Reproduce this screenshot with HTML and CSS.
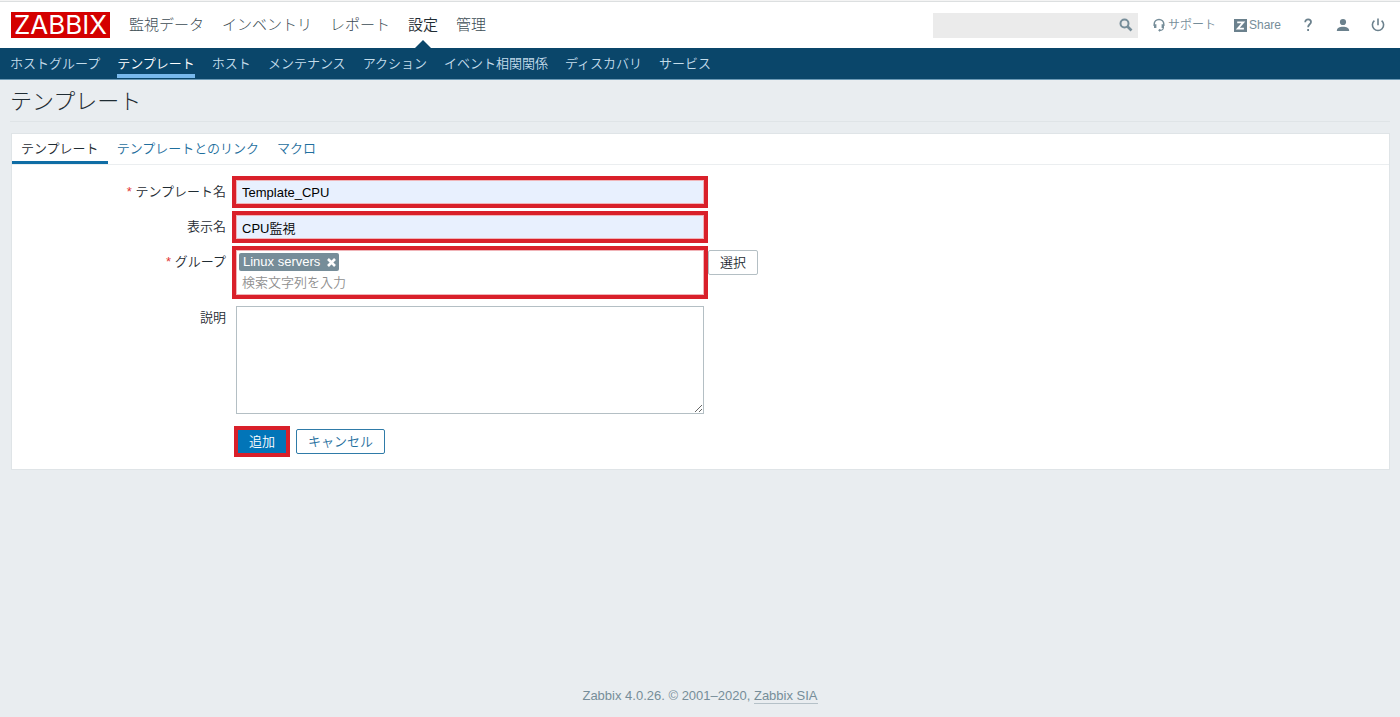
FILE: index.html
```html
<!DOCTYPE html>
<html lang="ja">
<head>
    <meta charset="UTF-8">
    <meta name="viewport" content="width=device-width, initial-scale=1.0">
    <title>テンプレート</title>
    <link rel="stylesheet" href="styles.css">
</head>
<body>
    <header class="header">
        <div class="top-bar">
            <a class="logo" href="#">ZABBIX</a>
            <nav class="top-nav">
                <a href="#">監視データ</a>
                <a href="#">インベントリ</a>
                <a href="#">レポート</a>
                <a class="selected" href="#">設定</a>
                <a href="#">管理</a>
            </nav>
            <div class="top-tools">
                <form class="search">
                    <input type="text" aria-label="検索">
                    <button type="submit" aria-label="検索">
                        <svg width="14" height="14" viewBox="0 0 14 14" fill="none" stroke="#768d99">
                            <circle cx="5.5" cy="5.5" r="4" stroke-width="2"/>
                            <path d="M8.5 8.5L12.5 12.5" stroke-width="2.6"/>
                        </svg>
                    </button>
                </form>
                <a class="tool-link" href="#">
                    <svg width="12" height="14" viewBox="0 0 12 14" fill="none" stroke="#768d99">
                        <path d="M1.2 8V6.2a4.8 4.8 0 0 1 9.6 0V8" stroke-width="1.5"/>
                        <path d="M2.2 6.2v3.8M9.8 6.2v3.8" stroke-width="2.4"/>
                        <path d="M10.4 9.5q0 2.7-3.6 2.9" stroke-width="1.1"/>
                        <circle cx="6.6" cy="12.3" r="0.8" fill="#768d99"/>
                    </svg>
                    サポート
                </a>
                <a class="tool-link share" href="#">
                    <svg width="13" height="13" viewBox="0 0 13 13">
                        <rect width="13" height="13" fill="#6b818d"/>
                        <path d="M3.2 3.4H9.3L3.8 9.7H9.9" fill="none" stroke="#fff" stroke-width="1.8"/>
                    </svg>
                    Share
                </a>
                <a class="tool-icon" href="#" aria-label="ヘルプ">
                    <svg width="14" height="14" viewBox="0 0 14 14" fill="none" stroke="#6b818d" stroke-width="1.8">
                        <path d="M4.2 4.3C4.2 2.4 5.4 1.4 7.1 1.4S10 2.4 10 4C10 6.3 7.1 6.3 7.1 9.2"/>
                        <path d="M7.1 11.1v2"/>
                    </svg>
                </a>
                <a class="tool-icon" href="#" aria-label="プロフィール">
                    <svg width="14" height="14" viewBox="0 0 14 14" fill="#6b818d">
                        <circle cx="7" cy="4" r="3.1"/>
                        <path d="M0.8 13C0.8 9.8 3.5 8.7 7 8.7s6.2 1.1 6.2 4.3z"/>
                    </svg>
                </a>
                <a class="tool-icon" href="#" aria-label="ログアウト">
                    <svg width="14" height="14" viewBox="0 0 14 14" fill="none" stroke="#6b818d" stroke-width="1.6">
                        <path d="M3.4 2.6a5.6 5.6 0 1 0 7.2 0"/>
                        <path d="M7 0.6v6.6"/>
                    </svg>
                </a>
            </div>
        </div>
        <nav class="sub-nav">
            <a href="#">ホストグループ</a>
            <a class="selected" href="#">テンプレート</a>
            <a href="#">ホスト</a>
            <a href="#">メンテナンス</a>
            <a href="#">アクション</a>
            <a href="#">イベント相関関係</a>
            <a href="#">ディスカバリ</a>
            <a href="#">サービス</a>
        </nav>
    </header>

    <main class="content">
        <h1 class="page-title">テンプレート</h1>

        <form class="panel">
            <nav class="tabs">
                <a class="active" href="#">テンプレート</a>
                <a href="#">テンプレートとのリンク</a>
                <a href="#">マクロ</a>
            </nav>
            <div class="form-rows">
                <div class="row">
                    <label class="required" for="template-name">テンプレート名</label>
                    <input class="field marked" id="template-name" type="text" value="Template_CPU">
                </div>
                <div class="row">
                    <label for="visible-name">表示名</label>
                    <input class="field marked" id="visible-name" type="text" value="CPU監視">
                </div>
                <div class="row">
                    <label class="required" for="groups">グループ</label>
                    <div class="group-select">
                        <div class="multiselect marked">
                            <span class="tag">Linux servers
                                <button type="button" aria-label="削除">
                                    <svg width="9" height="9" viewBox="0 0 9 9" stroke="#fff" stroke-width="2.6">
                                        <path d="M1 1L8 8M8 1L1 8"/>
                                    </svg>
                                </button>
                            </span>
                            <input id="groups" type="text" placeholder="検索文字列を入力">
                        </div>
                        <button class="btn btn-grey" type="button">選択</button>
                    </div>
                </div>
                <div class="row">
                    <label for="description">説明</label>
                    <textarea id="description"></textarea>
                </div>
                <div class="row actions-row">
                    <div class="actions">
                        <button class="btn btn-primary marked" type="submit">追加</button>
                        <button class="btn" type="button">キャンセル</button>
                    </div>
                </div>
            </div>
        </form>
    </main>

    <footer class="footer">Zabbix 4.0.26. © 2001–2020, <a href="#">Zabbix SIA</a></footer>
</body>
</html>
```
FILE: styles.css
```css
* {
    box-sizing: border-box;
}

body {
    margin: 0;
    min-height: 100vh;
    display: flex;
    flex-direction: column;
    background: #e9edf0;
    color: #1f2c33;
    font-family: "Liberation Sans", "Noto Sans CJK JP", sans-serif;
    font-size: 13px;
    font-weight: 350;
    line-height: 20px;
}

a {
    text-decoration: none;
}

input,
textarea,
button {
    margin: 0;
    font: inherit;
    color: inherit;
}

.header {
    border-top: 1px solid #f4f4f4;
}

.top-bar {
    display: flex;
    align-items: center;
    height: 47px;
    padding: 0 15px 0 11px;
    background: #fff;
    border-top: 1px solid #dcdfe0;
}

.logo {
    padding: 0 3px;
    background: #d40000;
    color: #fff;
    font-family: Inter, sans-serif;
    font-size: 26px;
    font-weight: 400;
    line-height: 26px;
}

.top-nav {
    display: flex;
    gap: 18px;
    align-self: stretch;
    margin-left: 19px;
    font-size: 15px;
    font-weight: 300;
}

.top-nav a {
    position: relative;
    display: flex;
    align-items: center;
    color: #3c4c54;
}

.top-nav .selected {
    color: #1f2c33;
    font-weight: 350;
}

/* arrow pointing up from the sub menu */
.top-nav .selected::after {
    content: "";
    position: absolute;
    bottom: 0;
    left: 50%;
    margin-left: -8px;
    border: 8px solid transparent;
    border-top: 0;
    border-bottom-color: #0a466a;
}

.top-tools {
    display: flex;
    align-items: center;
    margin-left: auto;
    font-size: 12px;
}

.search {
    display: flex;
    align-items: center;
    width: 205px;
    height: 25px;
    margin-right: 15px;
    padding-right: 5px;
    background: #ebebeb;
}

.search input {
    flex: 1;
    min-width: 0;
    border: 0;
    background: none;
}

.search button,
.tag button {
    display: flex;
    padding: 0;
    border: 0;
    background: none;
}

.tool-link {
    display: flex;
    align-items: center;
    gap: 3px;
    margin-right: 18px;
    color: #768d99;
}

.share {
    gap: 2px;
    margin-right: 20px;
}

.tool-icon {
    display: flex;
}

.tool-icon + .tool-icon {
    margin-left: 21px;
}

.sub-nav {
    display: flex;
    gap: 17px;
    height: 32px;
    padding: 0 10px;
    background: #0a466a;
    border-bottom: 1px solid #6c9ab6;
}

.sub-nav a {
    height: 30px;
    padding-top: 6px;
    color: #c3dcea;
}

.sub-nav .selected {
    border-bottom: 4px solid #78b9ec;
    color: #fff;
}

.content {
    padding: 0 10px;
}

.page-title {
    margin: 0 0 11px;
    padding: 8px 0 6px;
    border-bottom: 1px solid #dfe4e7;
    font-size: 22px;
    font-weight: 300;
    line-height: 27px;
}

.panel {
    margin-left: 1px;
    background: #fff;
    border: 1px solid #dfe4e7;
}

.tabs {
    display: flex;
    border-bottom: 1px solid #ebeef0;
}

.tabs a {
    padding: 5px 9px 2px;
    border-bottom: 3px solid transparent;
    color: #1f6f9e;
}

.tabs .active {
    border-color: #0f6da5;
    color: #1f2c33;
}

.form-rows {
    display: grid;
    gap: 11px;
    padding: 15px 0;
}

.row {
    display: grid;
    grid-template-columns: 214px 1fr;
    column-gap: 10px;
    align-items: start;
}

.row label {
    padding-top: 2px;
    text-align: right;
}

.required::before {
    content: "* ";
    color: #e33734;
}

.field,
.multiselect,
textarea {
    width: 100%;
    max-width: 468px;
    border: 1px solid #b4bfc4;
    border-radius: 0;
}

.field {
    height: 24px;
    padding: 0 5px;
    background: #e8f0fe;
    color: #000;
}

.marked {
    border-color: #f0b4b8;
    outline: 4px solid #d9202a;
}

.group-select {
    display: flex;
    gap: 4px;
    align-items: flex-start;
}

.multiselect {
    display: flex;
    flex-direction: column;
    gap: 2px;
    align-items: flex-start;
    height: 45px;
    padding: 2px;
}

.tag {
    display: flex;
    align-items: center;
    gap: 7px;
    padding: 0 3px 0 4px;
    border-radius: 2px;
    background: #768d99;
    color: #fff;
    line-height: 18px;
}

.multiselect input {
    width: 100%;
    height: 20px;
    padding: 0 3px;
    border: 0;
    background: none;
}

.multiselect input::placeholder {
    color: #8f8f8f;
}

textarea {
    display: block;
    height: 108px;
    padding: 4px 5px;
}

.actions-row {
    padding-top: 4px;
}

.actions {
    display: flex;
    grid-column: 2;
    gap: 9px;
    padding-left: 1px;
}

.btn {
    height: 25px;
    padding: 0 11px;
    border: 1px solid #2f7ba8;
    border-radius: 2px;
    background: #fff;
    color: #1f6f9e;
    line-height: 20px;
}

.btn-grey {
    border-color: #b4bfc4;
    color: #1f2c33;
}

.btn-primary {
    border-color: #0275b8;
    border-radius: 0;
    background: #0275b8;
    color: #fff;
    outline-offset: -1px;
}

.footer {
    margin-top: auto;
    padding-bottom: 11px;
    color: #768d99;
    text-align: center;
}

.footer a {
    border-bottom: 1px solid #b5c1c8;
    color: inherit;
}
```
